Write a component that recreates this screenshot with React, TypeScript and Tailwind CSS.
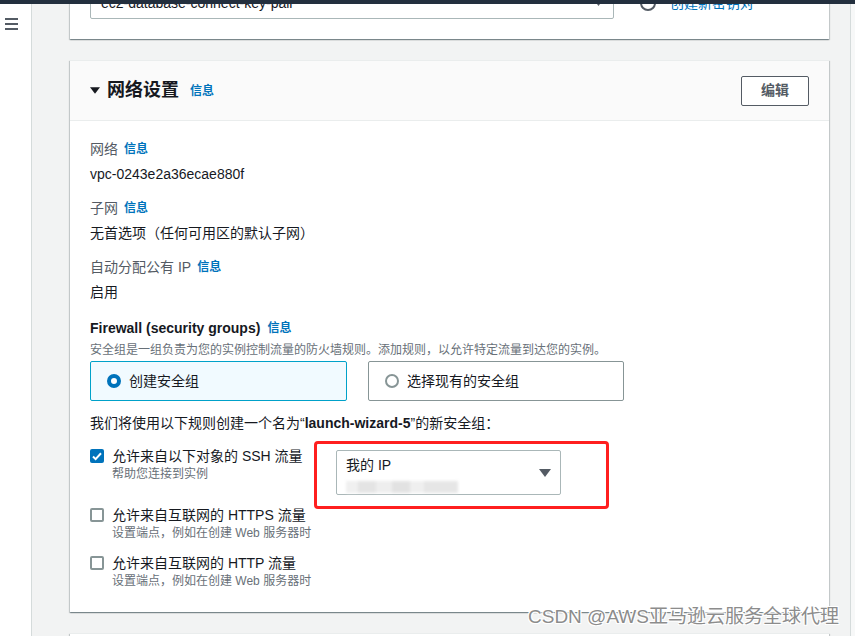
import type { ReactNode } from 'react'

const FONT = '[font-family:"Liberation_Sans","Noto_Sans_CJK_SC",sans-serif]'

const CARD =
  'bg-white border-t border-[#eaeded] shadow-[0_1px_1px_0_rgba(0,28,36,0.3),1px_1px_1px_0_rgba(0,28,36,0.15),-1px_1px_1px_0_rgba(0,28,36,0.15)]'

function Info() {
  return <span className="text-[12px] font-bold text-[#0073bb] leading-5">信息</span>
}

function FieldLabel({ children }: { children: ReactNode }) {
  return (
    <div className="flex items-center gap-[6px] h-5">
      <span className="text-[14px] text-[#545b64] leading-5">{children}</span>
      <Info />
    </div>
  )
}

function Field({ label, value }: { label: string; value: string }) {
  return (
    <div>
      <FieldLabel>{label}</FieldLabel>
      <div className="mt-[5px] text-[14px] leading-5 text-[#16191f]">{value}</div>
    </div>
  )
}

function Caret({ className }: { className?: string }) {
  return (
    <svg viewBox="0 0 12 8" className={className} fill="currentColor">
      <path d="M0 0h12L6 8z" />
    </svg>
  )
}

function Checkbox({ checked }: { checked?: boolean }) {
  if (checked) {
    return (
      <span className="flex h-[14px] w-[14px] shrink-0 items-center justify-center rounded-[2px] bg-[#0073bb]">
        <svg viewBox="0 0 14 14" className="h-[14px] w-[14px]" fill="none" stroke="white" strokeWidth={2}>
          <path d="M3 7.5l2.6 2.6L11 4.2" />
        </svg>
      </span>
    )
  }
  return <span className="block h-[14px] w-[14px] shrink-0 rounded-[2px] border-2 border-[#879596] bg-white" />
}

function RuleRow({ checked, title, hint }: { checked?: boolean; title: string; hint: string }) {
  return (
    <div className="flex items-start gap-2">
      <div className="mt-[3px]">
        <Checkbox checked={checked} />
      </div>
      <div>
        <div className="text-[14px] leading-5 text-[#16191f]">{title}</div>
        <div className="text-[12px] leading-4 text-[#687078]">{hint}</div>
      </div>
    </div>
  )
}

function BlurredIp() {
  const blocks = ['w-[12px] bg-[#f0f0f0]', 'w-[18px] bg-[#e4e4e4]', 'w-[16px] bg-[#eeeeee]', 'w-[18px] bg-[#e2e2e2]', 'w-[14px] bg-[#efefef]', 'w-[34px] bg-[#e6e6e6]']
  return (
    <div className="mt-[6px] flex h-[12px] blur-[1.5px]">
      {blocks.map((b, i) => (
        <span key={i} className={`h-full ${b}`} />
      ))}
    </div>
  )
}

export default function App() {
  return (
    <div className={`relative flex h-[636px] w-[855px] flex-col overflow-hidden bg-[#f2f3f3] ${FONT}`}>
      <div className="h-[4px] shrink-0 bg-[#232f3e]" />

      <div className="flex min-h-0 flex-1">
        {/* side navigation toggle */}
        <div className="w-[32px] shrink-0 border-r border-[#d5dbdb] bg-white pt-[14px] pl-[5px]">
          <div className="flex w-[13px] flex-col gap-[3px]">
            <span className="h-[2px] bg-[#545b64]" />
            <span className="h-[2px] bg-[#545b64]" />
            <span className="h-[2px] bg-[#545b64]" />
          </div>
        </div>

        <main className="min-w-0 flex-1 overflow-hidden pl-[38px] pr-[21px]">
          {/* key pair card (scrolled past) */}
          <section className={`${CARD} -mt-[38px] p-5`}>
            <div className="flex items-center">
              <div className="flex h-8 w-[524px] items-center justify-between rounded-[2px] border border-[#aab7b8] px-[10px]">
                <span className="text-[14px] text-[#16191f]">ec2-database-connect-key-pair</span>
                <Caret className="h-[6px] w-[9px] text-[#545b64]" />
              </div>
              <span className="ml-[26px] h-[16px] w-[16px] rounded-full border-2 border-[#545b64]" />
              <span className="ml-[14px] text-[14px] text-[#0073bb]">创建新密钥对</span>
            </div>
          </section>

          {/* network settings card */}
          <section className={`${CARD} mt-[21px]`}>
            <header className="flex h-[60px] items-center justify-between border-b border-[#eaeded] bg-[#fafafa] px-5">
              <div className="flex items-center">
                <Caret className="h-[7px] w-[10px] text-[#16191f]" />
                <h2 className="ml-[7px] text-[18px] font-bold text-[#16191f]">网络设置</h2>
                <span className="ml-[11px] text-[12px] font-bold text-[#0073bb]">信息</span>
              </div>
              <button className="h-[30px] w-[68px] rounded-[2px] border border-[#545b64] bg-white text-[14px] font-bold text-[#545b64]">
                编辑
              </button>
            </header>

            <div className="px-5 pt-[18px] pb-[23px]">
              <div className="flex flex-col gap-[14px]">
                <Field label="网络" value="vpc-0243e2a36ecae880f" />
                <Field label="子网" value="无首选项（任何可用区的默认子网）" />
                <Field label="自动分配公有 IP" value="启用" />
              </div>

              <div className="mt-4 flex h-5 items-center gap-[7px]">
                <span className="text-[14px] font-bold text-[#16191f]">Firewall (security groups)</span>
                <Info />
              </div>
              <p className="mt-1 text-[12px] leading-4 text-[#687078]">
                安全组是一组负责为您的实例控制流量的防火墙规则。添加规则，以允许特定流量到达您的实例。
              </p>

              <div className="mt-[3px] flex gap-[21px]">
                <div className="flex h-[40px] w-[257px] items-center gap-2 rounded-[2px] border border-[#00a1c9] bg-[#f1faff] px-4">
                  <span className="h-[14px] w-[14px] rounded-full border-[4px] border-[#0073bb] bg-white" />
                  <span className="text-[14px] text-[#16191f]">创建安全组</span>
                </div>
                <div className="flex h-[40px] w-[256px] items-center gap-2 rounded-[2px] border border-[#879596] bg-white px-4">
                  <span className="h-[14px] w-[14px] rounded-full border-2 border-[#879596] bg-white" />
                  <span className="text-[14px] text-[#16191f]">选择现有的安全组</span>
                </div>
              </div>

              <p className="mt-3 text-[14px] leading-5 text-[#16191f]">
                我们将使用以下规则创建一个名为“<span className="font-bold">launch-wizard-5</span>”的新安全组：
              </p>

              <div className="mt-[13px] flex items-start">
                <div className="w-[246px] shrink-0">
                  <RuleRow checked title="允许来自以下对象的 SSH 流量" hint="帮助您连接到实例" />
                </div>
                <div className="relative mt-1">
                  <div className="flex h-[45px] w-[225px] items-start justify-between rounded-[2px] border border-[#aab7b8] bg-white pl-[9px] pr-[9px] pt-[4px]">
                    <div>
                      <div className="text-[14px] leading-5 text-[#16191f]">我的 IP</div>
                      <BlurredIp />
                    </div>
                    <Caret className="mt-[14px] h-[8px] w-[12px] text-[#545b64]" />
                  </div>
                  {/* annotation */}
                  <div className="pointer-events-none absolute -top-[9px] -bottom-[14px] -left-[22px] -right-[48px] rounded-[4px] border-[3px] border-[#ff1f1f]" />
                </div>
              </div>

              <div className="mt-[10px]">
                <RuleRow title="允许来自互联网的 HTTPS 流量" hint="设置端点，例如在创建 Web 服务器时" />
              </div>
              <div className="mt-3">
                <RuleRow title="允许来自互联网的 HTTP 流量" hint="设置端点，例如在创建 Web 服务器时" />
              </div>
            </div>
          </section>

          {/* next card */}
          <section className={`${CARD} mt-[21px] h-[40px]`} />
        </main>

        <div className="w-[5px] shrink-0 border-l border-[#d5dbdb] bg-[#f7f8f8]" />
      </div>

      <div className="pointer-events-none absolute left-[528px] top-[605px] text-[19px] leading-6 text-[#8c8c8c] [text-shadow:1px_1px_0_#fff,-1px_-1px_0_#fff,1px_-1px_0_#fff,-1px_1px_0_#fff]">
        CSDN @AWS亚马逊云服务全球代理
      </div>
    </div>
  )
}
